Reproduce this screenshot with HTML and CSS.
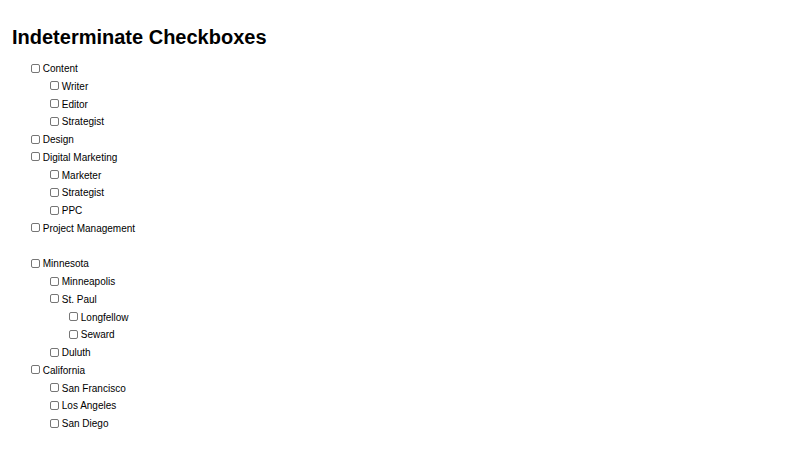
FILE: index.html
```html
<!DOCTYPE html>
<html>
<head>
<meta charset="utf-8">
<link rel="stylesheet" href="styles.css">
</head>
<body>
<h1 class="title">Indeterminate Checkboxes</h1>
<ul class="tree">
  <li><label><input type="checkbox" class="cb"> Content</label>
    <ul class="tree">
      <li><label><input type="checkbox" class="cb"> Writer</label></li>
      <li><label><input type="checkbox" class="cb"> Editor</label></li>
      <li><label><input type="checkbox" class="cb"> Strategist</label></li>
    </ul>
  </li>
  <li><label><input type="checkbox" class="cb"> Design</label></li>
  <li><label><input type="checkbox" class="cb"> Digital Marketing</label>
    <ul class="tree">
      <li><label><input type="checkbox" class="cb"> Marketer</label></li>
      <li><label><input type="checkbox" class="cb"> Strategist</label></li>
      <li><label><input type="checkbox" class="cb"> PPC</label></li>
    </ul>
  </li>
  <li><label><input type="checkbox" class="cb"> Project Management</label></li>
</ul>
<ul class="tree second">
  <li><label><input type="checkbox" class="cb"> Minnesota</label>
    <ul class="tree">
      <li><label><input type="checkbox" class="cb"> Minneapolis</label></li>
      <li><label><input type="checkbox" class="cb"> St. Paul</label>
        <ul class="tree">
          <li><label><input type="checkbox" class="cb"> Longfellow</label></li>
          <li><label><input type="checkbox" class="cb"> Seward</label></li>
        </ul>
      </li>
      <li><label><input type="checkbox" class="cb"> Duluth</label></li>
    </ul>
  </li>
  <li><label><input type="checkbox" class="cb"> California</label>
    <ul class="tree">
      <li><label><input type="checkbox" class="cb"> San Francisco</label></li>
      <li><label><input type="checkbox" class="cb"> Los Angeles</label></li>
      <li><label><input type="checkbox" class="cb"> San Diego</label></li>
    </ul>
  </li>
</ul>
</body>
</html>
```
FILE: styles.css
```css
html, body {
  margin: 0;
  padding: 0;
  background: #fff;
}
body {
  padding: 0 12px;
  font-family: "Liberation Sans", Arial, sans-serif;
  font-size: 10px;
  color: #000;
}
.title {
  font-size: 20px;
  font-weight: bold;
  margin: 25px 0 10px 0;
  line-height: 25px;
}
.tree {
  list-style: none;
  margin: 0;
  padding: 0 0 0 19px;
}
.tree li {
  line-height: 17.75px;
}
.second {
  margin-top: 17.75px;
}
.cb {
  -webkit-appearance: none;
  appearance: none;
  width: 9px;
  height: 9px;
  margin: 0;
  border: 1px solid #767676;
  border-radius: 2px;
  background: #fff;
  vertical-align: -0.5px;
  box-sizing: border-box;
}
```
